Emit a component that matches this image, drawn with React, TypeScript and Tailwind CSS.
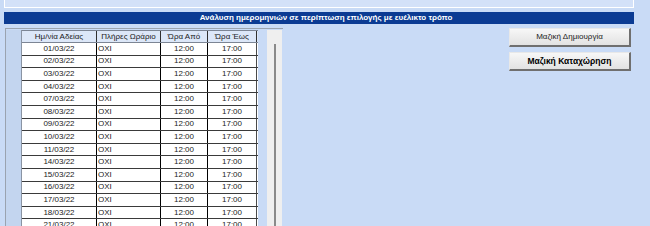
import React from "react";

const dates = [
  "01/03/22",
  "02/03/22",
  "03/03/22",
  "04/03/22",
  "07/03/22",
  "08/03/22",
  "09/03/22",
  "10/03/22",
  "11/03/22",
  "14/03/22",
  "15/03/22",
  "16/03/22",
  "17/03/22",
  "18/03/22",
  "21/03/22",
];

export default function App() {
  return (
    <div className="w-[650px] h-[226px] overflow-hidden bg-[#c9dbf6] font-['Liberation_Sans',Arial,sans-serif] text-[8px] text-[#1a1a1a]">
      {/* top panel */}
      <div className="ml-[4px] w-[630px] h-[8px] bg-[#d3e1f8] border-x border-b border-white" />

      {/* section title */}
      <div className="mt-[4px] ml-[4px] w-[630px] h-[12px] bg-[#0b3b93] text-white font-bold flex items-center justify-center pl-[14px] leading-none">
        Ανάλυση ημερομηνιών σε περίπτωση επιλογής με ευέλικτο τρόπο
      </div>

      <div className="flex mt-[4px]">
        {/* grid */}
        <div className="ml-[5px] w-[278px] h-[220px] border-t border-l border-[#9aa3b0] flex pt-[1px]">
          <div className="w-[16px] bg-[#c3d5ef] border-r border-[#8a94a3]" />
          <div className="w-[236px] flex flex-col">
            <div className="flex h-[13px] bg-[#dce7f8] border-y border-[#7c8594] leading-none">
              <div className="w-[75px] flex items-center justify-center border-r border-[#303030]">
                Ημ/νία Αδείας
              </div>
              <div className="w-[64px] flex items-center justify-center border-r border-[#303030]">
                Πλήρες Ωράριο
              </div>
              <div className="w-[47px] flex items-center justify-center border-r border-[#303030]">
                Ώρα Από
              </div>
              <div className="w-[49px] flex items-center justify-center border-r border-[#303030]">
                Ώρα Έως
              </div>
            </div>
            {dates.map((d) => (
              <div
                key={d}
                className="flex h-[12.6px] shrink-0 bg-white border-b border-[#3a3a3a] leading-none"
              >
                <div className="w-[75px] flex items-center justify-center border-r-[1.5px] border-black">
                  {d}
                </div>
                <div className="w-[64px] flex items-center pl-[1px] border-r-[1.5px] border-black">
                  OXI
                </div>
                <div className="w-[47px] flex items-center justify-center border-r-[1.5px] border-black">
                  12:00
                </div>
                <div className="w-[49px] flex items-center justify-center border-r-[1.5px] border-[#4a4a4a]">
                  17:00
                </div>
              </div>
            ))}
          </div>
          <div className="w-[9px]" />
          <div className="w-[15px] bg-[#efefef] flex justify-center pt-[14px]">
            <div className="w-[2px] h-full bg-[#8a8a8a]" />
          </div>
        </div>

        {/* buttons */}
        <div className="ml-auto mr-[19px] flex flex-col gap-[5px]">
          <button className="w-[122px] h-[19px] bg-gradient-to-b from-[#f7f7f7] to-[#e2e2e2] border border-t-[#e8e8e8] border-l-[#e8e8e8] border-r-2 border-b-2 border-r-[#6f6f6f] border-b-[#6f6f6f] text-[8px] text-[#222] leading-none">
            Μαζική Δημιουργία
          </button>
          <button className="w-[122px] h-[19px] bg-gradient-to-b from-[#f7f7f7] to-[#e2e2e2] border border-t-[#e8e8e8] border-l-[#e8e8e8] border-r-2 border-b-2 border-r-[#6f6f6f] border-b-[#6f6f6f] text-[8.5px] font-bold text-black leading-none">
            Μαζική Καταχώρηση
          </button>
        </div>
      </div>
    </div>
  );
}
